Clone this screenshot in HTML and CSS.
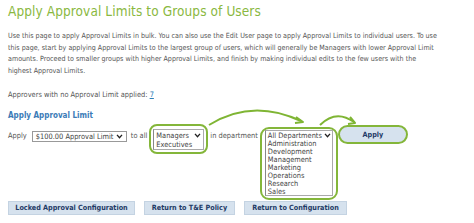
FILE: index.html
```html
<!DOCTYPE html>
<html>
<head>
<meta charset="utf-8">
<link rel="stylesheet" href="styles.css">
</head>
<body>
<div class="page">
  <h1 class="title">Apply Approval Limits to Groups of Users</h1>
  <p class="intro">Use this page to apply Approval Limits in bulk. You can also use the Edit User page to apply Approval Limits to individual users. To use this page, start by applying Approval Limits to the largest group of users, which will generally be Managers with lower Approval Limit amounts. Proceed to smaller groups with higher Approval Limits, and finish by making individual edits to the few users with the highest Approval Limits.</p>
  <p class="count">Approvers with no Approval Limit applied: <a class="count-link" href="#">7</a></p>
  <h2 class="section">Apply Approval Limit</h2>
  <div class="apply-row">
    <span class="lbl lbl-apply">Apply</span>
    <div class="select limit-select">
      <span>$100.00 Approval Limit</span>
      <svg class="chev" viewBox="0 0 8 6" width="7" height="5"><path d="M1 1 L4 4.5 L7 1" fill="none" stroke="#222" stroke-width="1.6"/></svg>
    </div>
    <span class="lbl lbl-toall">to all</span>
    <div class="hl hl-roles">
      <div class="listbox roles">
        <div class="opt opt-head"><span>Managers</span><svg class="chev" viewBox="0 0 8 6" width="7" height="5"><path d="M1 1 L4 4.5 L7 1" fill="none" stroke="#222" stroke-width="1.6"/></svg></div>
        <div class="opt">Executives</div>
      </div>
    </div>
    <span class="lbl lbl-dept">in department</span>
    <div class="hl hl-dept">
      <div class="listbox depts">
        <div class="opt opt-head"><span>All Departments</span><svg class="chev" viewBox="0 0 8 6" width="7" height="5"><path d="M1 1 L4 4.5 L7 1" fill="none" stroke="#222" stroke-width="1.6"/></svg></div>
        <div class="opt">Administration</div>
        <div class="opt">Development</div>
        <div class="opt">Management</div>
        <div class="opt">Marketing</div>
        <div class="opt">Operations</div>
        <div class="opt">Research</div>
        <div class="opt">Sales</div>
      </div>
    </div>
    <div class="hl-pill">
      <button class="btn btn-apply">Apply</button>
    </div>
  </div>
  <div class="actions">
    <button class="btn btn-locked">Locked Approval Configuration</button>
    <button class="btn btn-policy">Return to T&amp;E Policy</button>
    <button class="btn btn-config">Return to Configuration</button>
  </div>
  <svg class="arrows" viewBox="0 0 474 223" width="474" height="223">
    <path d="M209 125 Q252 98 301 121" fill="none" stroke="#7fb534" stroke-width="2"/>
    <path d="M296 117 L303 122 L295 123" fill="none" stroke="#7fb534" stroke-width="2" stroke-linejoin="round"/>
    <path d="M320 125 Q336 109 354 122" fill="none" stroke="#7fb534" stroke-width="2"/>
    <path d="M350 117 L355 123 L348 124" fill="none" stroke="#7fb534" stroke-width="2" stroke-linejoin="round"/>
  </svg>
</div>
</body>
</html>
```
FILE: styles.css
```css
* { box-sizing: border-box; }
html, body { margin: 0; padding: 0; background: #fff; }
body {
  font-family: "DejaVu Sans", Verdana, sans-serif;
  font-stretch: condensed;
  color: #555;
}
.page { padding: 0 8px; position: relative; height: 223px; }
.title {
  margin: 0;
  padding-top: 2px;
  font-size: 13.5px;
  line-height: 18px;
  font-weight: normal;
  color: #8ab83f;
  letter-spacing: 0.1px;
}
.intro {
  margin: 10px 0 0;
  font-size: 7.1px;
  line-height: 11.7px;
  width: 433px;
}
.count {
  margin: 12px 0 0;
  font-size: 7.4px;
  line-height: 11px;
}
.count-link { color: #2c7fb8; }
.section {
  margin: 11px 0 0;
  font-size: 8px;
  line-height: 10px;
  font-weight: bold;
  color: #3b7bb7;
}
.apply-row {
  display: flex;
  align-items: flex-start;
  margin-top: 3px;
  font-size: 7.4px;
}
.lbl { line-height: 10px; margin-top: 7px; }
.lbl-apply { margin-right: 5px; }
.lbl-toall { margin-left: 4px; margin-right: 2px; }
.lbl-dept { margin-left: 2px; margin-right: 2px; }
.select {
  margin-top: 7px;
  width: 95px;
  height: 11px;
  border: 1px solid #999;
  display: flex;
  align-items: center;
  justify-content: space-between;
  padding: 0 3px 0 3px;
  color: #444;
  font-size: 7.4px;
  background: #fff;
}
.chev { display: block; flex: none; }
.hl {
  border: 2px solid #84b63a;
  border-radius: 8px;
}
.hl-roles { width: 59px; height: 30px; padding: 3px 2px 2px 2px; }
.hl-dept { width: 78px; height: 73px; margin-top: 3px; padding: 1px 3px 2px 3px; border-radius: 9px; }
.listbox {
  background: #fff;
  border: 1px solid #aaa;
  border-left-color: #888;
  color: #444;
  height: 100%;
}
.roles { padding: 1px 2px; }
.depts { padding: 1px 1px 0 2px; }
.opt { font-size: 7.4px; line-height: 8px; white-space: nowrap; }
.roles .opt { line-height: 9px; }
.opt-head { display: flex; justify-content: space-between; align-items: center; }
.hl-pill { margin-top: 1px; }
.btn {
  font-family: inherit;
  font-stretch: condensed;
  font-weight: bold;
  font-size: 7.2px;
  color: #1f3b66;
  background: #d6e2ee;
  border: 1px solid #c4d3e2;
  padding: 0;
  height: 14px;
}
.btn-apply {
  width: 70px;
  height: 19px;
  border: 2px solid #84b63a;
  border-radius: 10px;
  background: #d6e2ee;
}
.arrows { position: absolute; left: 0; top: 0; pointer-events: none; }
.actions {
  display: flex;
  gap: 9px;
  margin-top: 1px;
}
.btn-locked { width: 127px; }
.btn-policy { width: 91px; }
.btn-config { width: 103px; }
```
